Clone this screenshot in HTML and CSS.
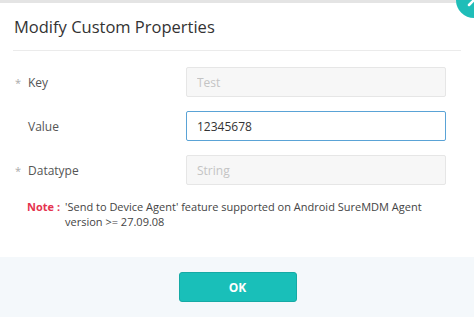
FILE: index.html
```html
<!DOCTYPE html>
<html lang="en">
<head>
    <meta charset="UTF-8">
    <meta name="viewport" content="width=device-width, initial-scale=1.0">
    <title>Modify Custom Properties</title>
    <link rel="stylesheet" href="styles.css">
</head>
<body>
    <div class="backdrop"></div>
    <div class="modal">
        <!-- close button, cut by the window edge -->
        <span class="close">
            <svg width="36" height="36" viewBox="0 0 36 36">
                <path d="M13 23 L23 13 M13 13 L23 23" stroke="#fff" stroke-width="2.5" stroke-linecap="round"/>
            </svg>
        </span>
        <div class="modal-header">
            <h2>Modify Custom Properties</h2>
        </div>
        <div class="modal-body">
            <div class="row">
                <label class="label"><span class="req">*</span>Key</label>
                <input type="text" class="input" placeholder="Test" disabled>
            </div>
            <div class="row">
                <label class="label"><span class="req"></span>Value</label>
                <input type="text" class="input active" value="12345678">
            </div>
            <div class="row">
                <label class="label"><span class="req">*</span>Datatype</label>
                <input type="text" class="input" placeholder="String" disabled>
            </div>
            <div class="note">
                <span class="note-title">Note :</span>
                <span class="note-text">'Send to Device Agent' feature supported on Android SureMDM Agent version &gt;= 27.09.08</span>
            </div>
        </div>
        <div class="modal-footer">
            <button class="button">OK</button>
        </div>
    </div>
</body>
</html>
```

FILE: styles.css
```css
body {
    font-family: "Open Sans", Arial, sans-serif;
    margin: 0;
    padding: 0;
    background-color: #fff;
    width: 474px;
    height: 317px;
    overflow: hidden;
    position: relative;
}
.backdrop {
    height: 3px;
    background-color: #e4e4e4;
}
.modal {
    background-color: white;
    height: 314px;
    display: flex;
    flex-direction: column;
}
.close {
    position: absolute;
    top: -18px;
    right: -18px;
    width: 36px;
    height: 36px;
    border-radius: 50%;
    background-color: #1fbdb8;
}
.close svg {
    display: block;
}
.modal-header {
    margin: 0 13px 0 13px;
    height: 47px;
    border-bottom: 1px solid #ebebeb;
    display: flex;
    align-items: center;
}
.modal-header h2 {
    margin: 0 0 0 1px;
    font-size: 16.5px;
    font-weight: normal;
    color: #333;
}
.modal-body {
    padding: 16px 0 0 0;
    flex: 1;
}
.row {
    display: flex;
    align-items: center;
    height: 30px;
    margin-bottom: 14px;
}
.label {
    width: 186px;
    font-size: 12px;
    color: #555;
    padding-left: 15px;
    box-sizing: border-box;
    display: flex;
    align-items: center;
}
.req {
    width: 13px;
    color: #aaa;
    font-size: 11px;
}
.input {
    width: 260px;
    height: 30px;
    box-sizing: border-box;
    border: 1px solid #e6e6e6;
    border-radius: 2px;
    background-color: #f7f7f7;
    padding: 0 10px;
    font-family: "Open Sans", Arial, sans-serif;
    font-size: 12px;
    color: #333;
    outline: none;
}
.input::placeholder {
    color: #c4c4c4;
}
.input.active {
    background-color: #fff;
    border: 1px solid #5aa3d6;
}
.note {
    display: flex;
    padding: 0 28px 0 27px;
    font-size: 11px;
    line-height: 15px;
    color: #444;
}
.note-title {
    color: #e5334f;
    font-weight: bold;
    white-space: nowrap;
    margin-right: 5px;
}
.modal-footer {
    background-color: #f4f8fb;
    height: 60px;
    display: flex;
    justify-content: center;
    align-items: center;
}
.button {
    width: 118px;
    height: 30px;
    margin-left: 1px;
    background-color: #19bfb9;
    color: white;
    border: 1px solid #15aaa5;
    border-radius: 3px;
    font-family: "Open Sans", Arial, sans-serif;
    font-weight: bold;
    font-size: 12px;
    cursor: pointer;
}
```
